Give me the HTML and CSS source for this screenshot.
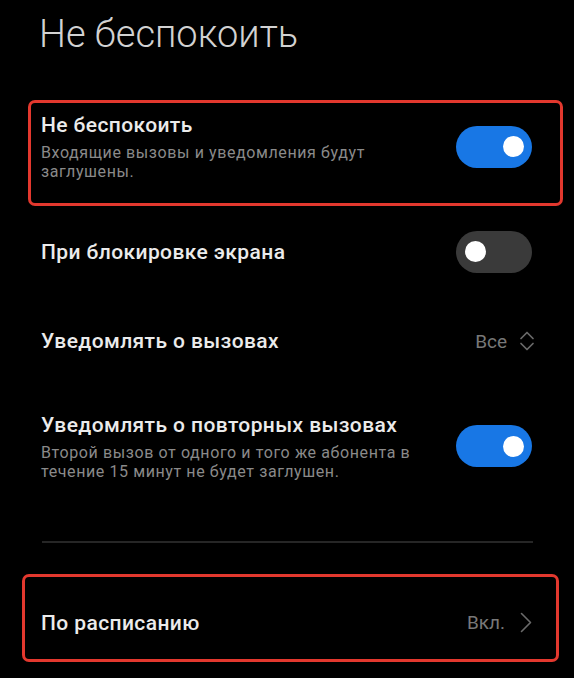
FILE: index.html
```html
<!DOCTYPE html>
<html lang="ru">
<head>
<meta charset="utf-8">
<link rel="stylesheet" href="styles.css">
</head>
<body>
<div class="screen">
  <header class="header"><h1 class="heading">Не беспокоить</h1></header>

  <section class="row boxed box1">
    <div class="texts">
      <div class="title">Не беспокоить</div>
      <div class="sub">Входящие вызовы и уведомления будут<br>заглушены.</div>
    </div>
    <div class="toggle on"><span class="knob"></span></div>
  </section>

  <section class="row row-lock">
    <div class="texts"><div class="title">При блокировке экрана</div></div>
    <div class="toggle off"><span class="knob"></span></div>
  </section>

  <section class="row row-calls">
    <div class="texts"><div class="title">Уведомлять о вызовах</div></div>
    <div class="value">Все
      <svg class="updown" width="16" height="22" viewBox="0 0 16 22"><path d="M2 8.5 L8 2.5 L14 8.5 M2 13.5 L8 19.5 L14 13.5" fill="none" stroke="#6a6a6a" stroke-width="1.7" stroke-linecap="round" stroke-linejoin="round"/></svg>
    </div>
  </section>

  <section class="row row-repeat">
    <div class="texts">
      <div class="title">Уведомлять о повторных вызовах</div>
      <div class="sub">Второй вызов от одного и того же абонента в<br>течение 15 минут не будет заглушен.</div>
    </div>
    <div class="toggle on"><span class="knob"></span></div>
  </section>

  <div class="divider"></div>

  <section class="row boxed box2">
    <div class="texts"><div class="title">По расписанию</div></div>
    <div class="value">Вкл.
      <svg class="chev" width="12" height="21" viewBox="0 0 12 21"><path d="M1.5 1.5 L10.5 10.5 L1.5 19.5" fill="none" stroke="#6a6a6a" stroke-width="1.6" stroke-linecap="round" stroke-linejoin="round"/></svg>
    </div>
  </section>
</div>
</body>
</html>
```

FILE: styles.css
```css
* { box-sizing: border-box; }
html, body { margin: 0; padding: 0; background: #000; }
body { font-family: Roboto, "Noto Sans", "DejaVu Sans", sans-serif; color: #e6e6e6; }
.screen { width: 574px; height: 678px; overflow: hidden; background: #000; }

.header { height: 100px; padding: 12px 0 0 39px; }
.heading { margin: 0; font-weight: 300; font-size: 38px; line-height: 44px; color: #d2d2d2; }

.row { display: flex; align-items: center; justify-content: space-between; padding: 0 42px 0 41px; }
.texts { display: flex; flex-direction: column; }
.title { font-size: 21px; font-weight: 500; line-height: 26px; letter-spacing: 0.4px; color: #ebebeb; }
.sub { font-size: 16px; line-height: 19px; letter-spacing: 0.6px; color: #8a8a8a; margin-top: 5px; }

.boxed { border: 3px solid #e3382e; border-radius: 7px; }
.box1 { margin-left: 28px; width: 535px; height: 106px; padding: 0 28px 13px 10px; }

.row-lock { height: 91px; }
.row-calls { height: 88px; padding-right: 39px; }
.row-repeat { height: 118px; padding-top: 4px; }

.toggle { position: relative; width: 76px; height: 42px; border-radius: 21px; flex: none; }
.toggle.on { background: #1877e5; }
.toggle.off { background: #3a3a3a; }
.knob { position: absolute; top: 10.5px; width: 21px; height: 21px; border-radius: 50%; background: #fff; }
.toggle.on .knob { right: 8px; }
.toggle.off .knob { left: 9px; }

.value { display: flex; align-items: center; gap: 12px; font-size: 19px; color: #787878; }

.divider { height: 1.5px; background: #262626; margin: 38px 41px 31px 42px; }

.box2 { margin-left: 22px; width: 537px; height: 88px; padding: 10px 24px 0 16px; }
.box2 .value { gap: 15px; }
```
